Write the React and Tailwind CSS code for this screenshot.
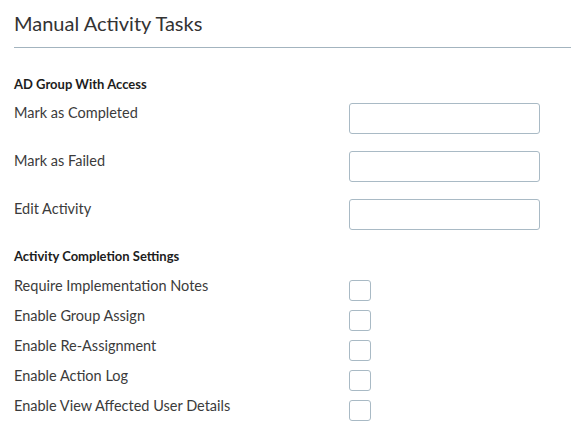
import { useState } from 'react';

const accessRows = ['Mark as Completed', 'Mark as Failed', 'Edit Activity'];

const settingRows = [
  'Require Implementation Notes',
  'Enable Group Assign',
  'Enable Re-Assignment',
  'Enable Action Log',
  'Enable View Affected User Details',
];

export default function App() {
  const [checked, setChecked] = useState({});

  return (
    <div className="w-[571px] h-[439px] bg-white pl-[14px] pt-[9px] text-[#3b3b3b] font-['Lato','Noto_Sans',sans-serif]">
      {/* Header with full-width rule */}
      <h2 className="text-[20px] leading-[28px] text-[#333] pb-[10px] border-b border-[#a3b4bf]">
        Manual Activity Tasks
      </h2>

      {/* AD group section */}
      <h3 className="mt-[28px] text-[13px] leading-[16px] font-bold text-[#1d1d1d]">AD Group With Access</h3>
      <div className="mt-[11px] flex flex-col gap-[17px]">
        {accessRows.map((label) => (
          <div key={label} className="flex items-start">
            <span className="w-[335px] text-[14.5px] leading-[16px] pt-[2px]">{label}</span>
            <input
              type="text"
              className="w-[191px] h-[31px] rounded-[3px] border border-[#a9bac5] bg-white outline-none"
            />
          </div>
        ))}
      </div>

      {/* Completion settings */}
      <h3 className="mt-[18px] text-[13px] leading-[16px] font-bold text-[#1d1d1d]">Activity Completion Settings</h3>
      <div className="mt-[16px] flex flex-col gap-[9px]">
        {settingRows.map((label) => (
          <div key={label} className="flex items-start">
            <span className="w-[335px] text-[14.5px] leading-[16px] -mt-[2px]">{label}</span>
            <button
              type="button"
              onClick={() => setChecked((c) => ({ ...c, [label]: !c[label] }))}
              className="w-[22px] h-[21px] rounded-[3px] border border-[#a9bac5] bg-white"
            />
          </div>
        ))}
      </div>
    </div>
  );
}
